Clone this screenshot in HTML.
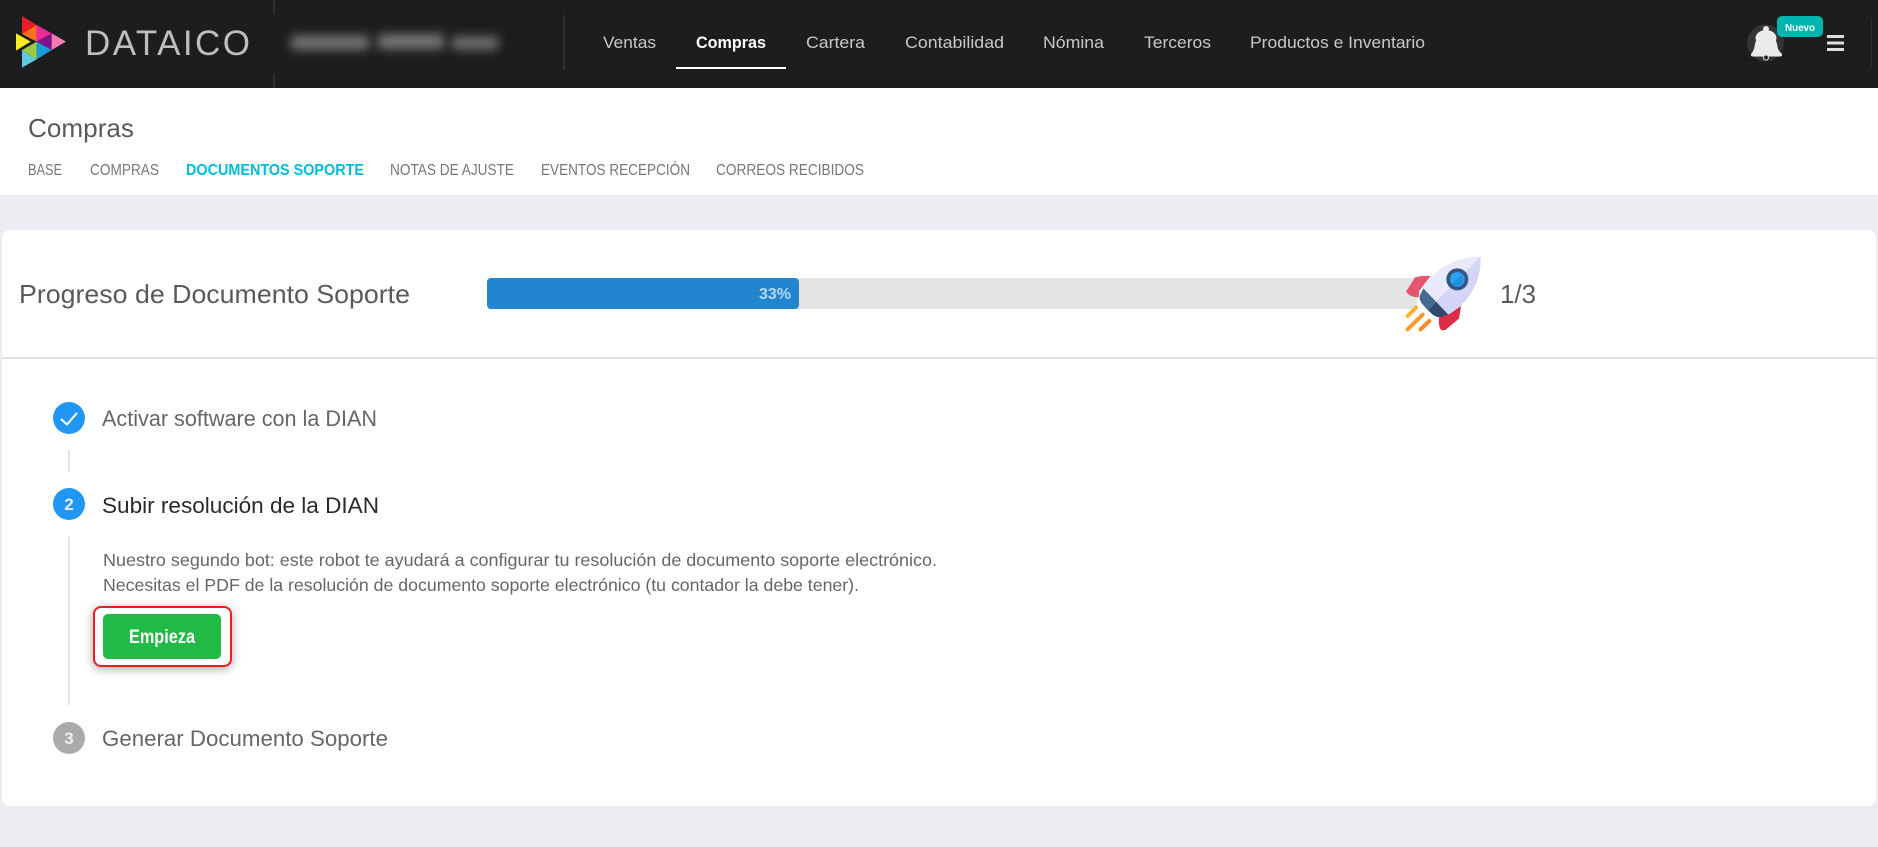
<!DOCTYPE html>
<html lang="es">
<head>
<meta charset="utf-8">
<title>Compras - Dataico</title>
<style>
html,body{margin:0;padding:0;width:1878px;height:847px;overflow:hidden;background:#ecedf2}
body{position:relative;font-family:"Liberation Sans",sans-serif}
.a{position:absolute}
svg{position:absolute;left:0;top:0}
text{font-family:"Liberation Sans",sans-serif}
</style>
</head>
<body>
<div class="a" style="left:0;top:0;width:1878px;height:88px;background:#1c1d1f"></div>
<div class="a" style="left:0;top:88px;width:1878px;height:107px;background:#fff"></div>
<div class="a" style="left:2px;top:230px;width:1874px;height:576px;background:#fff;border-radius:8px"></div>
<div class="a" style="left:2px;top:357px;width:1874px;height:2px;background:#dde1e5"></div>

<div class="a" style="left:273px;top:0;width:2px;height:14px;background:#2e2f31"></div>
<div class="a" style="left:273px;top:74px;width:2px;height:14px;background:#2e2f31"></div>
<div class="a" style="left:563px;top:15px;width:2px;height:55px;background:#2e2f31"></div>
<div class="a" style="left:1871px;top:18px;width:1px;height:50px;background:#2c2d2f"></div>

<div class="a" style="left:291px;top:35px;width:78px;height:15px;background:#707070;filter:blur(5px)"></div>
<div class="a" style="left:378px;top:34px;width:66px;height:15px;background:#757575;filter:blur(5px)"></div>
<div class="a" style="left:452px;top:36px;width:46px;height:14px;background:#6c6c6c;filter:blur(5px)"></div>

<div class="a" style="left:676px;top:67px;width:110px;height:2px;background:#fff"></div>

<div class="a" style="left:487px;top:278px;width:930px;height:31px;background:#e4e4e4;border-radius:4px"></div>
<div class="a" style="left:487px;top:278px;width:312px;height:31px;background:#2185d0;border-radius:4px"></div>

<div class="a" style="left:68px;top:450px;width:2px;height:22px;background:#e3e3e3"></div>
<div class="a" style="left:68px;top:537px;width:2px;height:168px;background:#e3e3e3"></div>
<div class="a" style="left:53px;top:402px;width:32px;height:32px;border-radius:50%;background:#2196f3"></div>
<div class="a" style="left:53px;top:488px;width:32px;height:32px;border-radius:50%;background:#2196f3"></div>
<div class="a" style="left:53px;top:722px;width:32px;height:32px;border-radius:50%;background:#aaa"></div>

<div class="a" style="left:93px;top:606px;width:135px;height:57px;border:2px solid #ee1c1c;border-radius:8px;box-shadow:0 2px 10px rgba(0,0,0,.35)"></div>
<div class="a" style="left:103px;top:614px;width:118px;height:45px;background:#21ba45;border-radius:5px"></div>

<!-- logo -->
<svg style="left:0;top:10px" width="90" height="65" viewBox="0 0 270 195">
<polygon points="66,18 110,45 66,72" fill="#ed1c24"/>
<polygon points="110,45 110,95 66,72" fill="#f9701f"/>
<polygon points="110,45 155,70 110,95" fill="#ee2a9b"/>
<polygon points="155,70 155,120 110,95" fill="#7f1287"/>
<polygon points="155,70 198,95 155,120" fill="#ef7cb4"/>
<polygon points="66,120 110,95 110,148" fill="#9ccb3b"/>
<polygon points="110,95 155,120 110,148" fill="#1b9cd8"/>
<polygon points="66,120 110,148 66,173" fill="#62c8e2"/>
<polygon points="44,62 104,95 44,130" fill="#1c1d1f"/>
<polygon points="48,70 92,95 48,122" fill="#f7ec23"/>
</svg>

<!-- bell, badge, burger -->
<svg width="1878" height="88" viewBox="0 0 1878 88">
<circle cx="1765.5" cy="43" r="18.5" fill="#333436"/>
<circle cx="1766" cy="29" r="3" fill="#ebebeb"/>
<polygon points="1758,34 1774,34 1777,44 1778,49 1782,55 1751,55 1754,49 1755,44" fill="#ebebeb"/>
<ellipse cx="1766" cy="38" rx="10.500" ry="8" fill="#ebebeb"/>
<rect x="1751" y="53" width="31" height="3.500" rx="1.500" fill="#ebebeb"/>
<circle cx="1766" cy="57.500" r="2.500" fill="#1c1d1f" stroke="#cfcfcf" stroke-width="1.200"/>
<rect x="1777" y="16" width="46" height="21" rx="5" fill="#00b5ad"/>
<text x="1785" y="31" font-size="10.500" font-weight="700" fill="#fff" textLength="30" lengthAdjust="spacingAndGlyphs">Nuevo</text>
<rect x="1827" y="35" width="17" height="3" fill="#ddd"/>
<rect x="1827" y="41.500" width="17" height="3" fill="#ddd"/>
<rect x="1827" y="48" width="17" height="3" fill="#ddd"/>
</svg>

<!-- rocket -->
<svg style="left:1360px;top:240px" width="200" height="110" viewBox="0 0 600 330">
<path d="M138 155L165 112Q185 106 212 108L178 152L176 172Q150 172 138 155z" fill="#e4566f"/>
<path d="M303 198L297 236L256 270Q245 274 240 265Q235 250 237 232L262 225z" fill="#dc2c4a"/>
<path d="M190 145C225 85 290 48 362 50L228 185z" fill="#e8e9fb"/>
<path d="M362 50C365 125 325 190 265 224L228 185z" fill="#d4d4f7"/>
<path d="M190 145L228 185L204 211L185 190Q176 176 180 165z" fill="#466a92"/>
<path d="M228 185L265 224L242 232Q228 232 218 224L204 211z" fill="#2f4a6b"/>
<circle cx="292" cy="118" r="33" fill="#34567f"/>
<circle cx="292" cy="118" r="22" fill="#2da1f5"/>
<path d="M276 132L306 103Q314 118 306 131Q292 142 276 132z" fill="#1f8fe6"/>
<g stroke-width="12" stroke-linecap="round" fill="none">
<path d="M143 228L168 203" stroke="#fcb22e"/>
<path d="M143 268L188 224" stroke="#fb9a2c"/>
<path d="M182 268L208 243" stroke="#f98a2a"/>
</g>
</svg>

<!-- text -->
<svg width="1878" height="847" viewBox="0 0 1878 847">
<text x="85" y="55" font-size="35" fill="#bdbdbd" textLength="165" lengthAdjust="spacing">DATAICO</text>

<g font-size="17" fill="#c8c8c8">
<text x="603" y="48" textLength="53" lengthAdjust="spacingAndGlyphs">Ventas</text>
<text x="696" y="48" textLength="70" lengthAdjust="spacingAndGlyphs" font-weight="700" fill="#fff">Compras</text>
<text x="806" y="48" textLength="59" lengthAdjust="spacingAndGlyphs">Cartera</text>
<text x="905" y="48" textLength="99" lengthAdjust="spacingAndGlyphs">Contabilidad</text>
<text x="1043" y="48" textLength="61" lengthAdjust="spacingAndGlyphs">Nómina</text>
<text x="1144" y="48" textLength="67" lengthAdjust="spacingAndGlyphs">Terceros</text>
<text x="1250" y="48" textLength="175" lengthAdjust="spacingAndGlyphs">Productos e Inventario</text>
</g>

<text x="28" y="137" font-size="26" fill="#5a5a5a" textLength="106" lengthAdjust="spacingAndGlyphs">Compras</text>

<g font-size="15.500" fill="#777">
<text x="28" y="175" textLength="34" lengthAdjust="spacingAndGlyphs">BASE</text>
<text x="90" y="175" textLength="69" lengthAdjust="spacingAndGlyphs">COMPRAS</text>
<text x="186" y="175" textLength="178" lengthAdjust="spacingAndGlyphs" font-weight="700" fill="#00bcd9">DOCUMENTOS SOPORTE</text>
<text x="390" y="175" textLength="124" lengthAdjust="spacingAndGlyphs">NOTAS DE AJUSTE</text>
<text x="541" y="175" textLength="149" lengthAdjust="spacingAndGlyphs">EVENTOS RECEPCIÓN</text>
<text x="716" y="175" textLength="148" lengthAdjust="spacingAndGlyphs">CORREOS RECIBIDOS</text>
</g>

<text x="19" y="303" font-size="26" fill="#5a5a5a" textLength="391" lengthAdjust="spacingAndGlyphs">Progreso de Documento Soporte</text>
<text x="759" y="299" font-size="16" font-weight="700" fill="#b5d7f2" textLength="32" lengthAdjust="spacingAndGlyphs">33%</text>
<text x="1500" y="303" font-size="26" fill="#5a5a5a" textLength="36" lengthAdjust="spacingAndGlyphs">1/3</text>

<path d="M61.500 419.500L67 424.500L76.500 413.500" fill="none" stroke="#fff" stroke-width="2" stroke-linecap="round" stroke-linejoin="round"/>
<text x="69" y="510" font-size="17" font-weight="700" fill="#e4f1fd" text-anchor="middle">2</text>
<text x="69" y="744" font-size="17" font-weight="700" fill="#eee" text-anchor="middle">3</text>

<text x="102" y="426" font-size="22" fill="#666" textLength="275" lengthAdjust="spacingAndGlyphs">Activar software con la DIAN</text>
<text x="102" y="513" font-size="22" fill="#2a2a2a" textLength="277" lengthAdjust="spacingAndGlyphs">Subir resolución de la DIAN</text>
<text x="103" y="566" font-size="17.500" fill="#666" textLength="834" lengthAdjust="spacingAndGlyphs">Nuestro segundo bot: este robot te ayudará a configurar tu resolución de documento soporte electrónico.</text>
<text x="103" y="591" font-size="17.500" fill="#666" textLength="756" lengthAdjust="spacingAndGlyphs">Necesitas el PDF de la resolución de documento soporte electrónico (tu contador la debe tener).</text>
<text x="129" y="643" font-size="19" font-weight="700" fill="#fff" textLength="66" lengthAdjust="spacingAndGlyphs">Empieza</text>
<text x="102" y="746" font-size="22" fill="#666" textLength="286" lengthAdjust="spacingAndGlyphs">Generar Documento Soporte</text>
</svg>
</body>
</html>
